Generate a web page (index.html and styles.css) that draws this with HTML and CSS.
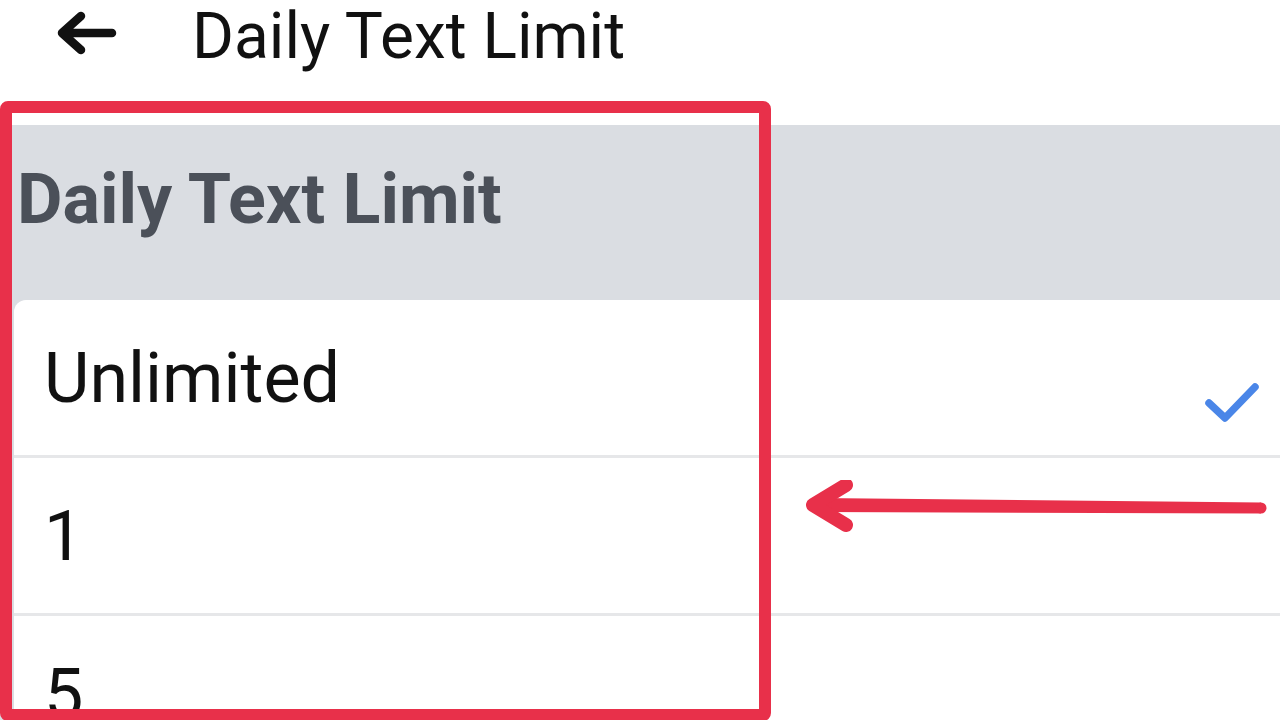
FILE: index.html
```html
<!DOCTYPE html>
<html lang="en">
<head>
  <meta charset="UTF-8">
  <meta name="viewport" content="width=device-width, initial-scale=1.0">
  <title>Daily Text Limit</title>
  <link rel="stylesheet" href="styles.css">
</head>
<body>
  <!-- Top bar -->
  <header class="top-bar">
    <svg class="back-icon" width="72" height="50" viewBox="0 0 72 50">
      <path d="M62 21 H13 M31 4 L12 21 L31 38" fill="none" stroke="#111" stroke-width="8.5" stroke-linecap="round" stroke-linejoin="round"/>
    </svg>
    <h1 class="top-title">Daily Text Limit</h1>
  </header>

  <!-- Setting section -->
  <section class="setting">
    <h2 class="setting-title">Daily Text Limit</h2>
    <div class="option-list">
      <div class="option-row">
        <span>Unlimited</span>
        <svg class="check-icon" width="64" height="48" viewBox="0 0 64 48">
          <path d="M9 25 L25 40 L55 9" fill="none" stroke="#4a86e8" stroke-width="7.5" stroke-linecap="round" stroke-linejoin="round"/>
        </svg>
      </div>
      <div class="option-row">
        <span>1</span>
      </div>
      <div class="option-row">
        <span>5</span>
      </div>
    </div>
  </section>

  <!-- Annotation overlay -->
  <div class="highlight-box"></div>
  <svg class="pointer-arrow" width="470" height="60" viewBox="0 0 470 60">
    <polygon points="15,18 458,22.5 458,33.5 15,32" fill="#e8304a"/>
    <circle cx="458" cy="28" r="5.5" fill="#e8304a"/>
    <path d="M43 5 L10 25 L43 45" fill="none" stroke="#e8304a" stroke-width="14" stroke-linecap="round" stroke-linejoin="round"/>
  </svg>
</body>
</html>
```

FILE: styles.css
```css
:root {
  --text-color: #111111;
  --muted-text: #4b5059;
  --band-bg: #dadde2;
  --divider: #e6e7e9;
  --accent-red: #e8304a;
}

body {
  margin: 0;
  height: 720px;
  overflow: hidden;
  position: relative;
  font-family: Roboto, "Liberation Sans", sans-serif;
  color: var(--text-color);
  background-color: #ffffff;
}

.top-bar {
  display: flex;
  align-items: center;
  height: 74px;
  padding-left: 50px;
}

.back-icon {
  overflow: visible;
}

.top-title {
  margin: 0 0 0 70px;
  font-size: 64px;
  font-weight: 400;
  line-height: 74px;
}

.setting {
  margin-top: 51px;
  background-color: var(--band-bg);
}

.setting-title {
  margin: 0;
  padding: 39px 0 66px 17px;
  font-size: 70px;
  font-weight: 700;
  line-height: 70px;
  color: var(--muted-text);
}

.option-list {
  margin-left: 14px;
  background-color: #ffffff;
  border-top-left-radius: 12px;
}

.option-row {
  display: flex;
  align-items: center;
  height: 155px;
  padding-left: 30px;
  font-size: 70px;
  line-height: 70px;
  border-bottom: 3px solid var(--divider);
}

.check-icon {
  align-self: flex-start;
  margin: 78px 16px 0 auto;
}

.highlight-box {
  position: absolute;
  left: 0;
  top: 101px;
  width: 771px;
  height: 620px;
  box-sizing: border-box;
  border: 12px solid var(--accent-red);
  border-radius: 8px;
}

.pointer-arrow {
  position: absolute;
  left: 803px;
  top: 480px;
}
```
